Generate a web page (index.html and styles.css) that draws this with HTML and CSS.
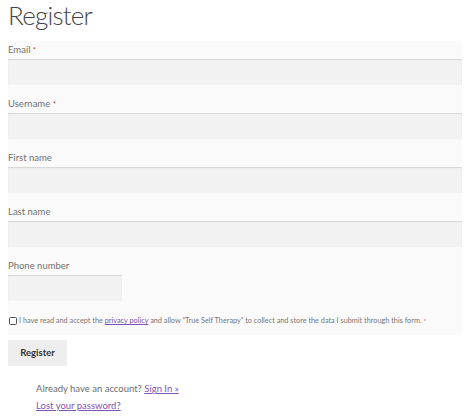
FILE: index.html
```html
<!DOCTYPE html>
<html>
<head>
<meta charset="utf-8">
<link rel="stylesheet" href="styles.css">
</head>
<body>
<h2 class="title">Register</h2>
<form class="register">
  <div class="field">
    <label class="label">Email <span class="req">*</span></label>
    <div class="input"></div>
  </div>
  <div class="field">
    <label class="label">Username <span class="req">*</span></label>
    <div class="input"></div>
  </div>
  <div class="field">
    <label class="label">First name</label>
    <div class="input"></div>
  </div>
  <div class="field">
    <label class="label">Last name</label>
    <div class="input"></div>
  </div>
  <div class="field">
    <label class="label">Phone number</label>
    <div class="input short"></div>
  </div>
  <div class="consent">
    <span class="box"></span>
    <span>I have read and accept the <a class="link" href="#">privacy policy</a> and allow “True Self Therapy” to collect and store the data I submit through this form. <span class="req">*</span></span>
  </div>
</form>
<div class="button">Register</div>
<div class="links">
  <p>Already have an account? <a class="link" href="#">Sign In »</a></p>
  <p><a class="link" href="#">Lost your password?</a></p>
</div>
</body>
</html>
```
FILE: styles.css
```css
html, body { background: #ffffff; }
body {
  margin: 0;
  padding: 0 8px;
  font-family: Lato, "Liberation Sans", sans-serif;
  color: #6d6d6d;
  width: 454px;
}
.title {
  margin: 0;
  padding-top: 0;
  font-size: 26px;
  font-weight: 300;
  color: #43454b;
  line-height: 30px;
  height: 41px;
  letter-spacing: -0.8px;
}
.register {
  background: #fafafa;
  padding: 2px 0 9px;
  margin: 0;
}
.field { margin-bottom: 12px; }
.label {
  display: block;
  font-size: 9.5px;
  line-height: 14px;
  padding-bottom: 2px;
  color: #727272;
}
.req { color: #e2401c; font-size: 8px; vertical-align: top; }
.input {
  height: 26px;
  background: #f2f2f2;
  box-shadow: inset 0 1px 1px rgba(0,0,0,0.12);
}
.input.short { width: 114px; }
.consent {
  display: flex;
  align-items: center;
  gap: 2px;
  font-size: 7.3px;
  line-height: 10px;
  padding: 3px 0 0 1px;
  white-space: nowrap;
  color: #777;
}
.consent .req { font-size: 6px; }
.box {
  width: 6px;
  height: 6px;
  border: 1px solid #555;
  border-radius: 1.5px;
  background: #fff;
  flex: none;
}
.link { color: #7f54b3; text-decoration: underline; }
.button {
  margin-top: 5px;
  width: 59px;
  height: 26px;
  line-height: 26px;
  text-align: center;
  background: #eeeeee;
  color: #333333;
  font-weight: 700;
  font-size: 9.5px;
}
.links {
  padding: 14px 0 0 28px;
  font-size: 9.5px;
}
.links p { margin: 0; line-height: 17px; }
```
